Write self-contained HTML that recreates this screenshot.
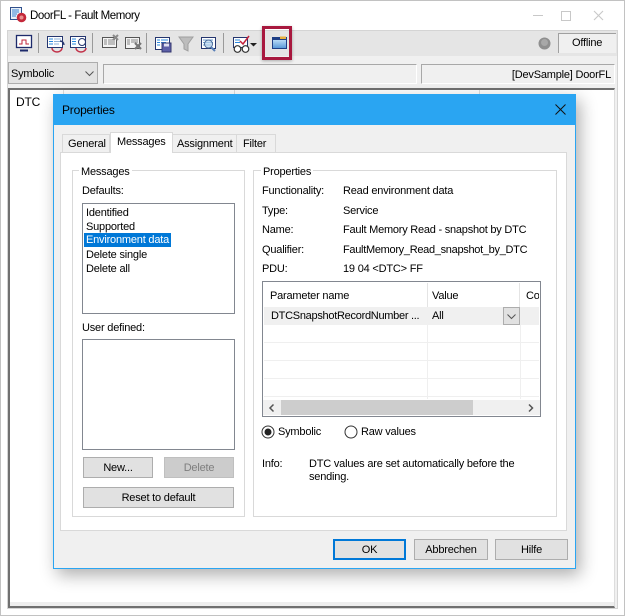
<!DOCTYPE html>
<html><head><meta charset="utf-8"><style>
html,body{margin:0;padding:0;background:#fff}
body{width:625px;height:616px;overflow:hidden;position:relative;font-family:"Liberation Sans",sans-serif;font-size:11px;letter-spacing:-.2px;color:#000}
.b{position:absolute;box-sizing:border-box}
.t{position:absolute;white-space:nowrap;line-height:14px;margin-top:1px}
.btn{position:absolute;box-sizing:border-box;background:#e1e1e1;border:1px solid #adadad;text-align:center;line-height:21px;font-size:11px}
svg{position:absolute;overflow:visible}
</style></head><body>
<!-- outer window -->
<div class="b" style="left:0;top:0;width:625px;height:616px;border:1px solid #c2c2c2"></div>
<svg style="left:10px;top:7px" width="18" height="16" viewBox="0 0 18 16"><rect x="0.500" y="0.500" width="11" height="12" fill="#e8f0f8" stroke="#31508c"/><path d="M2 3h7M2 5h7M2 7h5M2 9h4" stroke="#3a80d0"/><circle cx="11.500" cy="10.500" r="4.800" fill="#c4283a"/><circle cx="11.500" cy="10.500" r="2" fill="#e89090"/></svg>
<div class="t" style="left:30px;top:8px;font-size:11.5px;letter-spacing:-.42px">DoorFL - Fault Memory</div>
<svg style="left:533px;top:8px" width="85" height="16"><path d="M0 7.500h10" stroke="#c8c8c8"/><rect x="28.500" y="3.500" width="9" height="9" fill="none" stroke="#c8c8c8"/><path d="M61 3l9 9M70 3l-9 9" stroke="#c8c8c8" stroke-width="1.100"/></svg>
<!-- frame -->
<div class="b" style="left:7px;top:30px;width:611px;height:579px;background:#f0f0f0;border:1px solid #d4d4d4"></div>
<div class="b" style="left:8px;top:31px;width:609px;height:25px;background:#e5e5e5"></div>
<!-- toolbar icons -->
<svg style="left:8px;top:31px" width="250" height="25">
<rect x="8.500" y="4.500" width="15" height="12" fill="#fff" stroke="#1d2a6b" stroke-width="1.300"/><path d="M11 13h3v-4h4v4h3" fill="none" stroke="#c0263c"/><path d="M12 19.500h8" stroke="#1d2a6b" stroke-width="2"/>
<path d="M30.500 2v20M84.500 2v20M138.500 2v20M215.500 2v20" stroke="#9a9a9a"/>
<rect x="39.500" y="5.500" width="15" height="11" fill="#fff" stroke="#25366f"/><path d="M41 8h4M41 10.500h4M41 13h4" stroke="#2a88dd"/><path d="M46 8h7M46 10.500h7M46 13h5" stroke="#8cb0d8"/><path d="M44 17a5 4 0 0 0 10 0" fill="none" stroke="#c23048" stroke-width="1.400"/><path d="M52 10a4 4 0 0 1 4 4" fill="none" stroke="#25366f" stroke-width="1.400"/>
<rect x="62.500" y="5.500" width="15" height="11" fill="#fff" stroke="#25366f"/><path d="M64 8h4M64 10.500h4M64 13h4" stroke="#2a88dd"/><circle cx="74" cy="11" r="3.500" fill="#fff" stroke="#25366f"/><path d="M68 17a5 4 0 0 0 10 0" fill="none" stroke="#c23048" stroke-width="1.400"/>
<rect x="94.500" y="6.500" width="14" height="10" fill="#f4f4f4" stroke="#555"/><path d="M96 9h3M96 11h3M96 13h3M100 9h7M100 11h7M100 13h7" stroke="#888"/><path d="M105 4l5 5M110 4l-5 5" stroke="#8a8a8a" stroke-width="2"/>
<rect x="117.500" y="6.500" width="14" height="11" fill="#f4f4f4" stroke="#555"/><path d="M119 9h3M119 11h3M119 13h3M123 9h7M123 11h7" stroke="#888"/><path d="M127 12l6 6M133 12l-6 6" stroke="#777" stroke-width="2.200"/>
<rect x="147.500" y="6.500" width="14" height="12" fill="#fff" stroke="#25366f"/><path d="M149 9h3M149 11.500h3M149 14h3M153 9h7M153 11.500h5" stroke="#2a88dd"/><rect x="154" y="12" width="9" height="9" fill="#5d60a8" stroke="#35386f"/><rect x="156" y="12.500" width="5" height="3" fill="#e0e0f0"/>
<path d="M171 6h14l-5 7v7l-4-2v-5z" fill="#bdbdbd" stroke="#a0a0a0"/>
<rect x="193.500" y="6.500" width="14" height="11" fill="#fff" stroke="#25366f"/><path d="M195 9h10M195 11.500h10M195 14h8" stroke="#6a9ed0"/><circle cx="200.500" cy="13" r="4" fill="#b8d4ee" fill-opacity=".7" stroke="#4a6a98"/><path d="M203 16l4 4" stroke="#5a80b8" stroke-width="2"/>
<rect x="225.500" y="6.500" width="14" height="10" fill="#fff" stroke="#25366f"/><path d="M227 9h5M227 11.500h5" stroke="#2a88dd"/><path d="M232 10l3 3 6-8" fill="none" stroke="#c4203a" stroke-width="1.500"/><circle cx="229.500" cy="18" r="3.300" fill="#fff" stroke="#333" stroke-width="1.200"/><circle cx="237.500" cy="18" r="3.300" fill="#fff" stroke="#333" stroke-width="1.200"/>
<path d="M242 12h7l-3.500 3.500z" fill="#222"/>
</svg>
<!-- highlight -->
<div class="b" style="left:262px;top:26px;width:30px;height:34px;border:3px solid #a8183e;box-shadow:0 1px 3px rgba(0,0,0,.3)"></div>
<svg style="left:272px;top:36px" width="15" height="13"><defs><linearGradient id="g" x1="0" y1="0" x2="0" y2="1"><stop offset="0" stop-color="#b8daf6"/><stop offset="1" stop-color="#5a9ad8"/></linearGradient></defs><rect x="0" y="1" width="15" height="12" fill="#1f3f86"/><rect x="1" y="4" width="13" height="8" fill="url(#g)"/><rect x="8" y="0.500" width="6" height="2.500" fill="#e8b040"/></svg>
<!-- status -->
<svg style="left:538px;top:37px" width="14" height="14"><circle cx="6.500" cy="6.500" r="6" fill="#8f8f8f"/><circle cx="6.500" cy="5.500" r="3.500" fill="#a8a8a8"/></svg>
<div class="b" style="left:558px;top:33px;width:58px;height:20px;background:#f0f0f0;border-left:1px solid #a0a0a0;border-top:1px solid #a0a0a0"></div>
<div class="t" style="left:572px;top:35px">Offline</div>
<!-- combo row -->
<div class="b" style="left:8px;top:62px;width:90px;height:22px;background:#e3e3e3;border:1px solid #adadad"></div>
<div class="t" style="left:11px;top:66px">Symbolic</div>
<svg style="left:85px;top:71px" width="9" height="6"><path d="M0.500 0.500l4 4 4-4" fill="none" stroke="#555"/></svg>
<div class="b" style="left:103px;top:64px;width:314px;height:20px;background:#f0f0f0;border-left:1px solid #a8a8a8;border-top:1px solid #a8a8a8;border-right:1px solid #fff;border-bottom:1px solid #fff"></div>
<div class="b" style="left:421px;top:64px;width:194px;height:20px;background:#f0f0f0;border-left:1px solid #a8a8a8;border-top:1px solid #a8a8a8;border-right:1px solid #fff;border-bottom:1px solid #fff"></div>
<div class="t" style="right:14px;top:67px">[DevSample] DoorFL</div>
<!-- main list -->
<div class="b" style="left:8px;top:88px;width:607px;height:520px;background:#fff;border-top:2px solid #707070;border-left:2px solid #707070;border-bottom:2px solid #707070;border-right:1px solid #ddd"></div>
<div class="b" style="left:10px;top:602px;width:604px;height:4px;background:#eeeeee"></div>
<div class="b" style="left:63px;top:90px;width:1px;height:4px;background:#ddd"></div>
<div class="b" style="left:234px;top:90px;width:1px;height:4px;background:#ddd"></div>
<div class="b" style="left:479px;top:90px;width:1px;height:4px;background:#ddd"></div>
<div class="t" style="left:16px;top:94px;font-size:12px">DTC</div>
<!-- dialog -->
<div class="b" style="left:53px;top:94px;width:523px;height:475px;background:#f0f0f0;border:1px solid #2aa5f2;box-shadow:4px 6px 16px rgba(0,0,0,.32)"></div>
<div class="b" style="left:53px;top:94px;width:523px;height:31px;background:#2aa5f2"></div>
<div class="t" style="left:62px;top:102px;font-size:12px">Properties</div>
<svg style="left:555px;top:104px" width="11" height="11"><path d="M0.500 0.500l10 10M10.500 0.500l-10 10" stroke="#111" stroke-width="1"/></svg>
<!-- tab page -->
<div class="b" style="left:60px;top:152px;width:507px;height:379px;background:#fff;border:1px solid #d9d9d9"></div>
<div class="b" style="left:62px;top:134px;width:48px;height:19px;background:#f0f0f0;border:1px solid #d9d9d9"></div>
<div class="t" style="left:68px;top:136px">General</div>
<div class="b" style="left:172px;top:134px;width:65px;height:19px;background:#f0f0f0;border:1px solid #d9d9d9"></div>
<div class="t" style="left:177px;top:136px">Assignment</div>
<div class="b" style="left:236px;top:134px;width:40px;height:19px;background:#f0f0f0;border:1px solid #d9d9d9"></div>
<div class="t" style="left:243px;top:136px">Filter</div>
<div class="b" style="left:110px;top:132px;width:63px;height:21px;background:#fff;border:1px solid #d9d9d9;border-bottom:0"></div>
<div class="t" style="left:117px;top:134px">Messages</div>
<!-- group messages -->
<div class="b" style="left:72px;top:170px;width:173px;height:347px;border:1px solid #d9d9d9"></div>
<div class="t" style="left:79px;top:164px;background:#fff;padding:0 2px">Messages</div>
<div class="t" style="left:82px;top:183px">Defaults:</div>
<div class="b" style="left:82px;top:203px;width:153px;height:111px;background:#fff;border:1px solid #828790"></div>
<div class="t" style="left:86px;top:205px">Identified</div>
<div class="t" style="left:86px;top:219px">Supported</div>
<div class="b" style="left:84px;top:233px;width:87px;height:14px;background:#0078d7"></div>
<div class="t" style="left:86px;top:232px;color:#fff">Environment data</div>
<div class="t" style="left:86px;top:247px">Delete single</div>
<div class="t" style="left:86px;top:261px">Delete all</div>
<div class="t" style="left:82px;top:320px">User defined:</div>
<div class="b" style="left:82px;top:339px;width:153px;height:111px;background:#fff;border:1px solid #828790"></div>
<div class="btn" style="left:83px;top:457px;width:70px;height:21px">New...</div>
<div class="btn" style="left:164px;top:457px;width:70px;height:21px;background:#cccccc;border-color:#bfbfbf;color:#7e7e7e">Delete</div>
<div class="btn" style="left:83px;top:487px;width:151px;height:21px">Reset to default</div>
<!-- group properties -->
<div class="b" style="left:253px;top:170px;width:304px;height:347px;border:1px solid #d9d9d9"></div>
<div class="t" style="left:261px;top:164px;background:#fff;padding:0 2px">Properties</div>
<div class="t" style="left:262px;top:183px">Functionality:</div><div class="t" style="left:343px;top:183px">Read environment data</div>
<div class="t" style="left:262px;top:203px">Type:</div><div class="t" style="left:343px;top:203px">Service</div>
<div class="t" style="left:262px;top:222px">Name:</div><div class="t" style="left:343px;top:222px;letter-spacing:-.23px">Fault Memory Read - snapshot by DTC</div>
<div class="t" style="left:262px;top:242px">Qualifier:</div><div class="t" style="left:343px;top:242px;letter-spacing:-.3px">FaultMemory_Read_snapshot_by_DTC</div>
<div class="t" style="left:262px;top:261px">PDU:</div><div class="t" style="left:343px;top:261px">19 04 &lt;DTC&gt; FF</div>
<!-- table -->
<div class="b" style="left:262px;top:281px;width:279px;height:136px;background:#fff;border:1px solid #828790"></div>
<div class="b" style="left:264px;top:307px;width:275px;height:18px;background:#f0f0f0"></div>
<div class="b" style="left:427px;top:283px;width:1px;height:24px;background:#e4e4e4"></div>
<div class="b" style="left:519px;top:283px;width:1px;height:24px;background:#e4e4e4"></div>
<div class="b" style="left:264px;top:342px;width:275px;height:1px;background:#efefef"></div>
<div class="b" style="left:264px;top:360px;width:275px;height:1px;background:#efefef"></div>
<div class="b" style="left:264px;top:378px;width:275px;height:1px;background:#efefef"></div>
<div class="b" style="left:264px;top:396px;width:275px;height:1px;background:#efefef"></div>
<div class="b" style="left:427px;top:325px;width:1px;height:74px;background:#efefef"></div>
<div class="b" style="left:520px;top:325px;width:1px;height:74px;background:#efefef"></div>
<div class="t" style="left:270px;top:288px">Parameter name</div>
<div class="t" style="left:432px;top:288px">Value</div>
<div class="t" style="left:526px;top:288px;width:13px;overflow:hidden">Co</div>
<div class="t" style="left:271px;top:308px;width:154px;letter-spacing:-.28px;overflow:hidden">DTCSnapshotRecordNumber ...</div>
<div class="t" style="left:432px;top:308px">All</div>
<div class="b" style="left:503px;top:307px;width:17px;height:18px;background:#e1e1e1;border:1px solid #adadad"></div>
<svg style="left:507px;top:314px" width="9" height="6"><path d="M0.500 0.500l4 4 4-4" fill="none" stroke="#555"/></svg>
<!-- scrollbar -->
<div class="b" style="left:263px;top:400px;width:277px;height:15px;background:#f0f0f0"></div>
<div class="b" style="left:281px;top:400px;width:192px;height:15px;background:#cdcdcd"></div>
<svg style="left:269px;top:404px" width="6" height="8"><path d="M4.500 0.500L1 4l3.500 3.500" fill="none" stroke="#555" stroke-width="1.500"/></svg>
<svg style="left:528px;top:404px" width="6" height="8"><path d="M1 0.500L4.500 4 1 7.500" fill="none" stroke="#555" stroke-width="1.500"/></svg>
<!-- radios -->
<svg style="left:261px;top:425px" width="14" height="14"><circle cx="7" cy="7" r="6" fill="#fff" stroke="#333"/><circle cx="7" cy="7" r="3.500" fill="#222"/></svg>
<div class="t" style="left:278px;top:424px">Symbolic</div>
<svg style="left:344px;top:425px" width="14" height="14"><circle cx="7" cy="7" r="6" fill="#fff" stroke="#333"/></svg>
<div class="t" style="left:361px;top:424px">Raw values</div>
<div class="t" style="left:262px;top:456px">Info:</div>
<div class="t" style="left:309px;top:456px">DTC values are set automatically before the</div>
<div class="t" style="left:309px;top:469px">sending.</div>
<!-- footer -->
<div class="btn" style="left:333px;top:539px;width:73px;height:21px;border:2px solid #0078d7;line-height:19px">OK</div>
<div class="btn" style="left:414px;top:539px;width:74px;height:21px">Abbrechen</div>
<div class="btn" style="left:495px;top:539px;width:73px;height:21px">Hilfe</div>
</body></html>
